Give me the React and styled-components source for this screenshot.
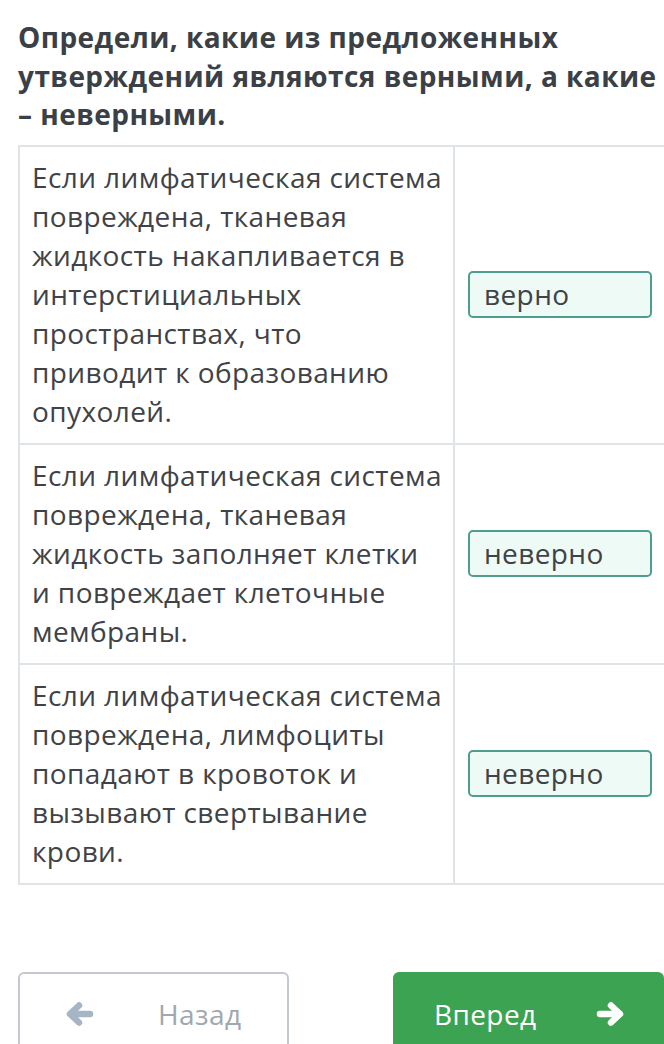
import React from "react"
import styled, { createGlobalStyle } from "styled-components"

const Global = createGlobalStyle`
  html, body {
    margin: 0;
    padding: 0;
    background: #fff;
    overflow: hidden;
  }
  body {
    font-family: "Open Sans", "Noto Sans", sans-serif;
  }
`;

const Page = styled.div`
  width: 664px;
  height: 1044px;
  padding: 18px 0 0 18px;
  box-sizing: border-box;
  overflow: hidden;
`;

const Title = styled.h2`
  margin: 0 0 11px;
  font-size: 28px;
  letter-spacing: 0.45px;
  line-height: 38.5px;
  font-weight: 700;
  color: #3b4046;
`;

const Table = styled.div`
  width: 660px;
  border: 2px solid #e1e4e6;
  border-right: none;
  display: grid;
  grid-template-columns: 435px 1fr;
`;

const Statement = styled.div`
  padding: 11px 10px 12px 12px;
  font-size: 28px;
  letter-spacing: 0.4px;
  line-height: 39px;
  color: #3f4347;
  border-right: 2px solid #e1e4e6;
  border-top: ${p => (p.first ? "none" : "2px solid #e1e4e6")};
`;

const AnswerCell = styled.div`
  display: flex;
  align-items: center;
  padding: 0 13px 0 13px;
  border-top: ${p => (p.first ? "none" : "2px solid #e1e4e6")};
`;

const Badge = styled.div`
  width: 184px;
  height: 47px;
  box-sizing: border-box;
  border: 2px solid #4f9c90;
  border-radius: 5px;
  background: #eefaf5;
  padding: 0 14px;
  font-size: 28px;
  letter-spacing: 0.4px;
  line-height: 43px;
  color: #3f4347;
`;

const Nav = styled.div`
  display: flex;
  justify-content: space-between;
  margin-top: 87px;
`;

const NavButton = styled.div`
  width: 271px;
  height: 85px;
  box-sizing: border-box;
  border-radius: 6px;
  display: flex;
  align-items: center;
  font-size: 28px;
  letter-spacing: 0.4px;
  ${p =>
    p.primary
      ? `
    background: #3ca352;
    color: #fff;
    padding: 0 40px 0 41px;
    justify-content: space-between;
  `
      : `
    background: #fff;
    border: 2px solid #c3c9ce;
    color: #9ea8b1;
    padding: 0 0 0 46px;
    gap: 64px;
  `}
  svg {
    width: 28px;
    height: 26px;
    flex-shrink: 0;
    color: ${p => (p.primary ? "#ffffff" : "#a6b5c3")};
  }
`;

const Arrow = ({ left }) => (
  <svg viewBox="0 0 28 26" style={left ? { transform: "scaleX(-1)" } : undefined}>
    <g
      fill="none"
      stroke="currentColor"
      strokeWidth="6.5"
      strokeLinecap="round"
      strokeLinejoin="round"
    >
      <path d="M4 13h19" />
      <path d="M15 4.5l9 8.5-9 8.5" />
    </g>
  </svg>
)

const rows = [
  {
    text:
      "Если лимфатическая система повреждена, тканевая жидкость накапливается в интерстициальных пространствах, что приводит к образованию опухолей.",
    answer: "верно",
  },
  {
    text: (
      <>
        Если лимфатическая система повреждена, тканевая жидкость заполняет клетки
        <br />и повреждает клеточные мембраны.
      </>
    ),
    answer: "неверно",
  },
  {
    text:
      "Если лимфатическая система повреждена, лимфоциты попадают в кровоток и вызывают свертывание крови.",
    answer: "неверно",
  },
]

export default function App() {
  return (
    <Page>
      <Global />
      <Title>
        Определи, какие из предложенных утверждений являются верными, а какие
        – неверными.
      </Title>
      <Table>
        {rows.map((r, i) => (
          <React.Fragment key={i}>
            <Statement first={i === 0}>{r.text}</Statement>
            <AnswerCell first={i === 0}>
              <Badge>{r.answer}</Badge>
            </AnswerCell>
          </React.Fragment>
        ))}
      </Table>
      <Nav>
        <NavButton>
          <Arrow left />
          Назад
        </NavButton>
        <NavButton primary>
          Вперед
          <Arrow />
        </NavButton>
      </Nav>
    </Page>
  )
}
